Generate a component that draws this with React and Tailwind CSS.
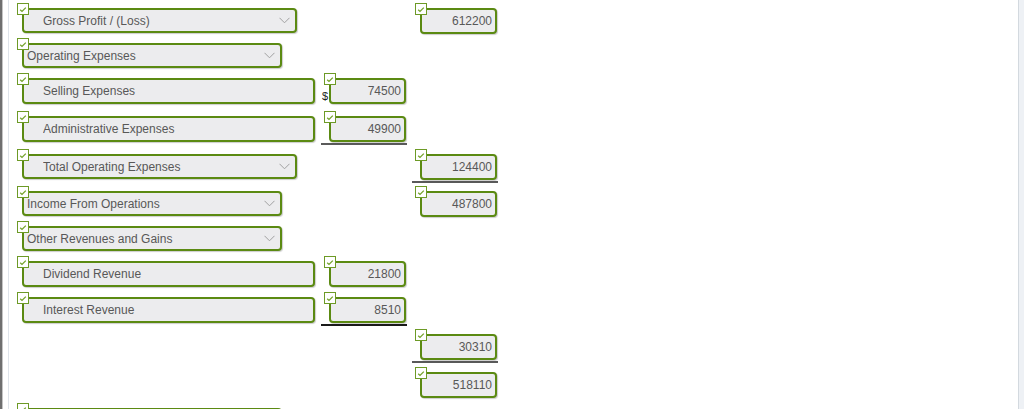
const rows = [
  { h: "h-[35px]", left: { w: "w-[275px]", label: "Gross Profit / (Loss)", indent: true, select: true }, right: { value: "612200" } },
  { h: "h-[35px]", left: { w: "w-[260px]", label: "Operating Expenses", select: true } },
  { h: "h-[38px]", left: { w: "w-[293px]", label: "Selling Expenses", indent: true }, mid: { value: "74500", dollar: true } },
  { h: "h-[38px]", left: { w: "w-[293px]", label: "Administrative Expenses", indent: true }, mid: { value: "49900", line: "border-[#5a5a5a]" } },
  { h: "h-[37px]", left: { w: "w-[275px]", label: "Total Operating Expenses", indent: true, select: true }, right: { value: "124400", line: "border-[#5a5a5a]" } },
  { h: "h-[35px]", left: { w: "w-[260px]", label: "Income From Operations", select: true }, right: { value: "487800" } },
  { h: "h-[35px]", left: { w: "w-[260px]", label: "Other Revenues and Gains", select: true } },
  { h: "h-[36px]", left: { w: "w-[293px]", label: "Dividend Revenue", indent: true }, mid: { value: "21800" } },
  { h: "h-[37px]", left: { w: "w-[293px]", label: "Interest Revenue", indent: true }, mid: { value: "8510", line: "border-[#1a1a1a]" } },
  { h: "h-[38px]", right: { value: "30310", line: "border-[#5a5a5a]" } },
  { h: "h-[36px]", right: { value: "518110" } },
  { h: "h-[36px]", left: { w: "w-[260px]", label: "", select: true } },
];

const Check = () => (
  <span className="absolute -left-[7px] -top-[7px] z-10 flex h-[12px] w-[12px] items-center justify-center border border-[#6d9a26] bg-white">
    <svg width="8" height="7" viewBox="0 0 8 7">
      <path d="M1.2 3.8 L3 5.4 L6.8 1.6" fill="none" stroke="#74a32a" strokeWidth="1.3" />
    </svg>
  </span>
);

const Box = ({ className, children }) => (
  <div
    className={`relative flex items-center rounded-[4px] border-2 border-[#5b8a12] bg-[#ececee] text-[12px] text-[#585858] shadow-[1px_1px_1px_rgba(0,0,0,0.2)] ${className}`}
  >
    <Check />
    {children}
  </div>
);

const LeftField = ({ w, label, indent, select }) => (
  <Box className={`${w} ${select ? "h-[25px]" : "h-[26px]"} ${indent ? "pl-[19px]" : "pl-[3px]"}`}>
    <span className="flex-1 truncate">{label}</span>
    {select && (
      <svg className="mr-[5px]" width="11" height="7" viewBox="0 0 11 7">
        <polyline points="0.5,0.8 5.5,5.8 10.5,0.8" fill="none" stroke="#a0a0a0" strokeWidth="1" />
      </svg>
    )}
  </Box>
);

const Amount = ({ value, dollar, line }) => (
  <div className={`-ml-[8px] w-[86px] pl-[8px] ${line ? `border-b-2 pb-[1px] ${line}` : ""}`}>
    <Box className="h-[26px] w-[77px] justify-end pr-[3px]">
      {dollar && <span className="absolute -left-[9px] bottom-[-2px] text-[11px] text-[#222]">$</span>}
      <span>{value}</span>
    </Box>
  </div>
);

export default function App() {
  return (
    <div className="flex h-[409px] w-[1024px] overflow-hidden bg-white font-['Liberation_Sans',Arial,sans-serif]">
      <div className="w-[2px] bg-[#6f6f6f]" />
      <div className="w-[1px] bg-[#c4c4c4]" />
      <div className="w-[5px]" />
      <div className="w-[1px] bg-[#dfe4ea]" />
      <main className="flex-1 pl-[13px] pt-[8px]">
        {rows.map((row, i) => (
          <div key={i} className={`grid grid-cols-[293px_77px_77px] gap-x-[14px] items-start ${row.h}`}>
            <div>{row.left && <LeftField {...row.left} />}</div>
            <div>{row.mid && <Amount {...row.mid} />}</div>
            <div>{row.right && <Amount {...row.right} />}</div>
          </div>
        ))}
      </main>
      <div className="w-[1px] bg-[#d3d9df]" />
      <div className="w-[5px] bg-[#eef1f5]" />
    </div>
  );
}
